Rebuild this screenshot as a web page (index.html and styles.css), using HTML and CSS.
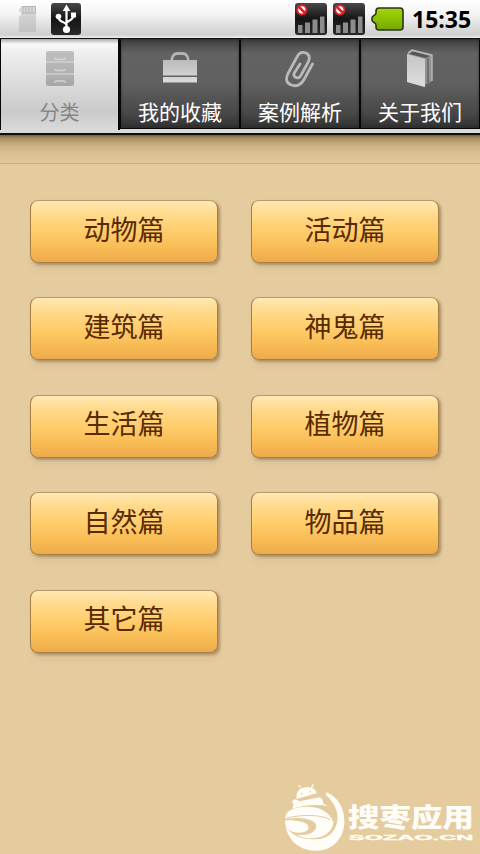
FILE: index.html
```html
<!DOCTYPE html>
<html lang="zh-CN">
<head>
<meta charset="utf-8">
<title>分类</title>
<link rel="stylesheet" href="styles.css">
</head>
<body>
<header class="status">
  <svg class="sd" width="20" height="28" viewBox="0 0 20 28"><defs><linearGradient id="sdg" x2="0" y2="1"><stop stop-color="#dcdcdc"/><stop offset="1" stop-color="#c2c2c2"/></linearGradient><linearGradient id="dark" x2="0" y2="1"><stop stop-color="#484848"/><stop offset=".5" stop-color="#151515"/><stop offset="1" stop-color="#292929"/></linearGradient></defs><path d="M4 1h14v26H1V12l2-2V7H1V4z" fill="url(#sdg)"/><path d="M4 1.500h14M4 8h14M5 2v6M8 2v6M11 2v6M14 2v6M17.500 2v6" stroke="#b4b4b4" fill="none"/></svg>
  <svg class="usb" width="30" height="32" viewBox="0 0 30 32"><rect width="30" height="32" rx="3" fill="url(#dark)"/><path d="M15.500 5v22M15.500 22c-1-4-8-2-8-8M15.500 20c1-3 7-2 7-8" stroke="#fff" stroke-width="2.200" fill="none"/><path d="M15.500 1.500l3.800 6.500h-7.600z" fill="#fff"/><circle cx="15.500" cy="26.500" r="3.600" fill="#fff"/><circle cx="7.500" cy="13.500" r="2.800" fill="#fff"/><path d="M20 9.500h5v5h-5z" fill="#fff"/></svg>
  <span class="spacer"></span>
  <svg class="signal" width="32" height="32" viewBox="0 0 32 32"><rect width="32" height="32" rx="3" fill="url(#dark)"/><path d="M3 22h4.500v8H3zM10 19.500h5V30h-5zM17.500 16.500h5V30h-5zM25 13.500h4.500V30H25z" fill="#8c8c8c"/><circle cx="6.800" cy="6.800" r="4.600" fill="#fff" stroke="#df2028" stroke-width="2"/><path d="M3.500 3.500l7 7" stroke="#df2028" stroke-width="2.500"/></svg>
  <svg class="signal" width="32" height="32" viewBox="0 0 32 32"><rect width="32" height="32" rx="3" fill="url(#dark)"/><path d="M3 22h4.500v8H3zM10 19.500h5V30h-5zM17.500 16.500h5V30h-5zM25 13.500h4.500V30H25z" fill="#8c8c8c"/><circle cx="6.800" cy="6.800" r="4.600" fill="#fff" stroke="#df2028" stroke-width="2"/><path d="M3.500 3.500l7 7" stroke="#df2028" stroke-width="2.500"/></svg>
  <svg class="battery" width="33" height="24" viewBox="0 0 33 24"><defs><linearGradient id="bat" x2="0" y2="1"><stop stop-color="#a5d414"/><stop offset=".4" stop-color="#90c500"/><stop offset="1" stop-color="#76a600"/></linearGradient></defs><path d="M8 1h21q3 0 3 3v16q0 3-3 3H8q-3 0-3-3v-2q0-1.500-2-2.500T1 13v-2q0-1.500 2-2.500T5 6V4q0-3 3-3z" fill="url(#bat)" stroke="#29360f" stroke-width="1.600"/></svg>
  <time class="clock">15:35</time>
</header>
<nav class="tabs">
  <div class="tab active">
    <svg class="icon" width="40" height="40" viewBox="0 0 40 40"><defs><linearGradient id="cab" x2="0" y2="1"><stop stop-color="#c2c2c2"/><stop offset="1" stop-color="#a7a7a7"/></linearGradient></defs><rect x="6" y="2" width="28" height="35" rx="2" fill="url(#cab)"/><path d="M6 13h28M6 25h28" stroke="#d0d0d0" stroke-width="1.500"/><path d="M6 5h28M6 16h28M6 28h28" stroke="#b5b5b5"/><path d="M15 9q0 1.500 2 1.500h6q2 0 2-1.500M15 20q0 1.500 2 1.500h6q2 0 2-1.500M15 33.500q0-1.500 2-1.500h6q2 0 2 1.500" stroke="#d4d4d4" stroke-width="1.600" fill="none"/></svg>
    <span class="label">分类</span>
  </div>
  <div class="tab">
    <svg class="icon" width="40" height="40" viewBox="0 0 40 40"><defs><linearGradient id="light" x2="0" y2="1"><stop stop-color="#b0b0b0"/><stop offset="1" stop-color="#dadada"/></linearGradient></defs><path d="M3 11h7.500C11 6 13.500 3 17 3h6c3.500 0 6 3 6.500 8H37v15.500H3zM13 11h14c-.5-3.500-2-5-4.500-5h-5C15 6 13.500 7.500 13 11zM3 28h34v5.500H3z" fill="url(#light)" fill-rule="evenodd"/></svg>
    <span class="label">我的收藏</span>
  </div>
  <div class="tab">
    <svg class="icon" width="40" height="40" viewBox="0 0 40 40"><path d="M32.500 15L24 30.500C21 36 17 38 11.500 36C6 34 5.500 30 8 24.500L17 8C19 4 22 2.500 26 4C30 6 30 10 28 13.500L20.500 27C19 30 13 29 14 24.500L20 15" fill="none" stroke="#b9b9b9" stroke-width="2.800" stroke-linecap="round" stroke-linejoin="round"/></svg>
    <span class="label">案例解析</span>
  </div>
  <div class="tab">
    <svg class="icon" width="40" height="40" viewBox="0 0 40 40"><defs><linearGradient id="book" x2="0" y2="1"><stop stop-color="#c6c6c6"/><stop offset="1" stop-color="#dedede"/></linearGradient></defs><path d="M7 5l5-4 20 5v26l-3 2-3 1-2 3-17-5z" fill="#929292"/><path d="M9 5l4-2.500L29.500 7 26 9z" fill="#555"/><path d="M7 5l18 5v28L7 33z" fill="url(#book)"/><path d="M8 4l4-3 20 5v26" fill="none" stroke="#bdbdbd" stroke-width="1.300"/><path d="M28 9v25" stroke="#666" stroke-width="1.500"/></svg>
    <span class="label">关于我们</span>
  </div>
</nav>
<div class="shade"></div>
<main class="grid">
  <button>动物篇</button><button>活动篇</button>
  <button>建筑篇</button><button>神鬼篇</button>
  <button>生活篇</button><button>植物篇</button>
  <button>自然篇</button><button>物品篇</button>
  <button>其它篇</button>
</main>
<footer class="brand">
  <svg width="210" height="80" viewBox="0 0 630 240">
    <g fill="#fffdf8">
      <path d="M79 71C79 49 94 39 111 40C127 40 139 47 140 58L79 75z"/>
      <path d="M92 42l-6-9M124 42l6-11" stroke="#fffdf8" stroke-width="4"/>
      <path d="M65 82l10-6 14 6 60-12 8 5 3 14 15 8q-20-5-39-4-38 1-69 11l4-14z"/>
      <path d="M169 54C205 70 223 103 223 143C223 192 188 230 139 230C91 230 57 203 47 158C64 181 87 193 118 195C144 199 171 192 185 177C214 145 207 97 168 64z"/>
      <path d="M47 125C52 106 89 96 124 99C157 101 183 121 191 147C184 178 156 194 119 193C104 192 91 189 82 182C113 187 138 176 139 157C139 139 111 133 84 132L46 134z"/>
      <path d="M46 139C78 137 113 144 115 157C119 174 94 180 69 174C53 168 43 158 46 139z"/>
    </g>
    <path d="M50 132C99 121 149 121 181 137" fill="none" stroke="#e5cc9f" stroke-width="3"/>
    <circle cx="95" cy="59" r="2.500" fill="#e5cc9f"/><circle cx="121" cy="53" r="2.500" fill="#e5cc9f"/>
    <text class="brand-name" x="234" y="160" textLength="378" lengthAdjust="spacingAndGlyphs">搜枣应用</text>
    <text class="brand-url" x="236" y="198" textLength="374" lengthAdjust="spacingAndGlyphs">SOZAO.CN</text>
  </svg>
</footer>
</body>
</html>
```
FILE: styles.css
```css
* { box-sizing: border-box; }
body {
  margin: 0;
  width: 480px;
  height: 854px;
  overflow: hidden;
  display: flex;
  flex-direction: column;
  background: #e5cc9f;
  font-family: "Noto Sans CJK SC", sans-serif;
}
svg { display: block; flex: none; }
.status {
  height: 38px;
  flex: none;
  display: flex;
  align-items: flex-start;
  padding: 3px 9px 0 18px;
  background: linear-gradient(#fff 0, #f5f5f5 35%, #dadada 75%, #d0d0d0 92%, #eee 100%);
}
.sd { margin-top: 2px; }
.usb { margin-left: 13px; }
.spacer { flex: 1; }
.signal { margin-right: 6px; }
.battery { margin-top: 4px; }
.clock {
  width: 59px;
  margin-left: 8px;
  text-align: right;
  font: bold 23px/33px "Open Sans", sans-serif;
  color: #000;
}
.tabs {
  height: 97px;
  flex: none;
  display: grid;
  grid-template-columns: repeat(4, 120px);
  border-top: 1px solid #111;
  border-bottom: 2px solid #150e05;
  background: #dadada;
}
.tab {
  height: 90px;
  display: flex;
  flex-direction: column;
  align-items: center;
  padding-top: 9px;
  color: #fff;
  border: 1px solid #080808;
  border-top-color: #333;
  background: linear-gradient(#404040, #626262 15%, #606060 50%, #454545 86%, #303030);
  box-shadow: inset 0 0 3px #2229;
}
.tab.active {
  height: 91px;
  color: #858585;
  border-width: 0 2px 0 1px;
  padding-top: 10px;
  background: linear-gradient(#aaa 0, #f8f8f8 5px, #eee 15%, #cacaca 80%, #dadada);
  box-shadow: none;
}
.label { font-size: 21px; line-height: 30px; margin-top: 7px; white-space: nowrap; }
.active .label { font-size: 20px; margin-top: 8px; }
.shade {
  height: 31px;
  flex: none;
  background:
    linear-gradient(#c9ae80, #c9ae80) 0 28px / 100% 1px no-repeat,
    linear-gradient(#77613f 0, #a58c62 3px, #bca276 7px, #cfb586 12px, #d9bf92 18px, #e0c699 26px, #e5cc9f);
}
.grid {
  display: grid;
  grid-template-columns: repeat(2, 188px);
  grid-auto-rows: 63px;
  gap: 34.4px 33px;
  padding: 34px 0 0 30px;
}
button {
  padding: 0 0 6px;
  border: 1px solid #a48047;
  border-top-color: #b99965;
  border-radius: 8px;
  background: linear-gradient(#ffe9b5 0, #ffdc91 18%, #ffcd6b 50%, #f8bb54 78%, #edaa4b);
  box-shadow: 2px 2px 3px #77532b80, 1px 9px 5px #c7b68a30;
  color: #572a00;
  font: 27px/36px "Noto Sans CJK SC", sans-serif;
}
.brand { height: 80px; margin: auto 0 0 270px; flex: none; }
.brand-name { font: 900 78px "Noto Sans CJK SC", sans-serif; fill: #fffdf8; }
.brand-url { font: bold 23px "Liberation Sans", sans-serif; fill: #fffdf8; stroke: #fffdf8; stroke-width: 1; }
```
